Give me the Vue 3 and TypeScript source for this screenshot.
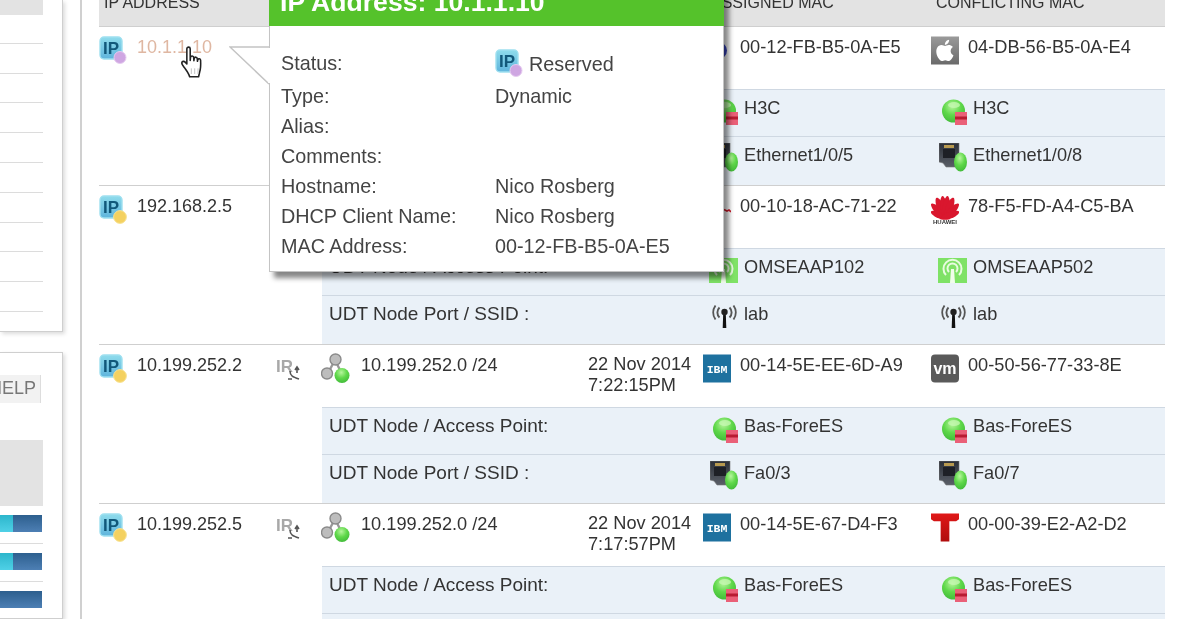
<script setup lang="ts">
interface Sub { label: string; icon: string; a: string; iconB: string; b: string }
interface Row { ip: string; badge: string; hover?: boolean; subnet: string; date: string[]; iconA: string; a: string; iconB: string; b: string; subs: Sub[] }

const node = 'UDT Node / Access Point:'
const port = 'UDT Node Port / SSID :'

const rows: Row[] = [
  { ip: '10.1.1.10', badge: 'ip-purple', hover: true, subnet: '10.1.1.0 /24', date: ['22 Nov 2014', '7:30:02PM'], iconA: 'logo-blue', a: '00-12-FB-B5-0A-E5', iconB: 'logo-apple', b: '04-DB-56-B5-0A-E4',
    subs: [
      { label: node, icon: 'globe', a: 'H3C', iconB: 'globe', b: 'H3C' },
      { label: port, icon: 'port', a: 'Ethernet1/0/5', iconB: 'port', b: 'Ethernet1/0/8' }
    ] },
  { ip: '192.168.2.5', badge: 'ip-yellow', subnet: '192.168.2.0 /24', date: ['22 Nov 2014', '7:28:40PM'], iconA: 'logo-mark', a: '00-10-18-AC-71-22', iconB: 'logo-huawei', b: '78-F5-FD-A4-C5-BA',
    subs: [
      { label: node, icon: 'ap', a: 'OMSEAAP102', iconB: 'ap', b: 'OMSEAAP502' },
      { label: port, icon: 'antenna', a: 'lab', iconB: 'antenna', b: 'lab' }
    ] },
  { ip: '10.199.252.2', badge: 'ip-yellow', subnet: '10.199.252.0 /24', date: ['22 Nov 2014', '7:22:15PM'], iconA: 'logo-ibm', a: '00-14-5E-EE-6D-A9', iconB: 'logo-vm', b: '00-50-56-77-33-8E',
    subs: [
      { label: node, icon: 'globe', a: 'Bas-ForeES', iconB: 'globe', b: 'Bas-ForeES' },
      { label: port, icon: 'port', a: 'Fa0/3', iconB: 'port', b: 'Fa0/7' }
    ] },
  { ip: '10.199.252.5', badge: 'ip-yellow', subnet: '10.199.252.0 /24', date: ['22 Nov 2014', '7:17:57PM'], iconA: 'logo-ibm', a: '00-14-5E-67-D4-F3', iconB: 'logo-t', b: '00-00-39-E2-A2-D2',
    subs: [
      { label: node, icon: 'globe', a: 'Bas-ForeES', iconB: 'globe', b: 'Bas-ForeES' },
      { label: port, icon: 'port', a: 'Fa0/5', iconB: 'port', b: 'Fa0/9' }
    ] }
]

const tipRows: [string, string][] = [
  ['Type:', 'Dynamic'],
  ['Alias:', ''],
  ['Comments:', ''],
  ['Hostname:', 'Nico Rosberg'],
  ['DHCP Client Name:', 'Nico Rosberg'],
  ['MAC Address:', '00-12-FB-B5-0A-E5']
]

const sideLines = Array.from({ length: 10 }, (_, i) => i)
const bars = [true, true, false]
const petals = [-70, -46, -24, -7, 7, 24, 46, 70]
</script>

<template>
  <div class="screen">
    <svg class="defs" width="0" height="0" aria-hidden="true">
      <defs>
        <linearGradient id="g-ip" x1="0" y1="0" x2="0" y2="1">
          <stop offset="0" stop-color="#8fdcec" /><stop offset="1" stop-color="#5fb4dc" />
        </linearGradient>
        <radialGradient id="g-green" cx=".45" cy=".3" r=".75">
          <stop offset="0" stop-color="#b6f59c" /><stop offset=".5" stop-color="#5fd84a" /><stop offset="1" stop-color="#3fb838" />
        </radialGradient>
        <linearGradient id="g-apple" x1="0" y1="0" x2="0" y2="1">
          <stop offset="0" stop-color="#9a9a9a" /><stop offset="1" stop-color="#6a6a6a" />
        </linearGradient>
        <linearGradient id="g-t" x1="0" y1="0" x2="0" y2="1">
          <stop offset="0" stop-color="#e01818" /><stop offset="1" stop-color="#b00c0c" />
        </linearGradient>
        <linearGradient id="g-port" x1="0" y1="0" x2="0" y2="1">
          <stop offset="0" stop-color="#2c3038" /><stop offset="1" stop-color="#5a5f68" />
        </linearGradient>

        <symbol id="ip-base" viewBox="0 0 28 29">
          <rect x="1" y="1" width="22" height="22" rx="4" fill="url(#g-ip)" stroke="#9fe0f0" stroke-width="1.4" />
          <text x="4" y="18" font-family="Liberation Sans, sans-serif" font-weight="700" font-size="17" fill="#11587a">IP</text>
        </symbol>
        <symbol id="ip-purple" viewBox="0 0 28 29">
          <use href="#ip-base" width="28" height="29" />
          <circle cx="21" cy="21.5" r="6" fill="#cfa6e2" stroke="#e6ccf0" />
        </symbol>
        <symbol id="ip-yellow" viewBox="0 0 28 29">
          <use href="#ip-base" width="28" height="29" />
          <circle cx="21" cy="22" r="6.4" fill="#f4d160" stroke="#f8e294" />
        </symbol>
        <symbol id="ir" viewBox="0 0 26 26">
          <text x="0" y="14" font-family="Liberation Sans, sans-serif" font-weight="700" font-size="17" fill="#a8a8a8">IR</text>
          <path d="M21 10v5M19 12l2-3 2 3" stroke="#555" stroke-width="1.6" fill="none" />
          <path d="M14 13c0 5 3 6 9 8M12 21h4" stroke="#555" stroke-width="1.6" fill="none" />
        </symbol>
        <symbol id="subnet" viewBox="0 0 30 32">
          <path d="M14 7L7 20M14 7l6 12" stroke="#999" stroke-width="2.4" />
          <circle cx="14.500" cy="6.500" r="5.500" fill="#bdbdbd" stroke="#8a8a8a" stroke-width="1.400" />
          <circle cx="6" cy="20.500" r="5.500" fill="#bdbdbd" stroke="#8a8a8a" stroke-width="1.400" />
          <circle cx="21" cy="22.500" r="7.500" fill="url(#g-green)" />
        </symbol>
        <symbol id="globe" viewBox="0 0 25 26">
          <circle cx="11.500" cy="12" r="11.500" fill="url(#g-green)" />
          <ellipse cx="12" cy="6" rx="6" ry="3" fill="#c4f7b0" opacity=".8" />
          <rect x="13" y="13" width="12" height="13" fill="#ea6078" />
          <rect x="13" y="17.500" width="12" height="3" fill="#b81c32" />
        </symbol>
        <symbol id="port" viewBox="0 0 28 29">
          <path d="M0 0h20v20l-3 4H7l-3-4-4-1z" fill="url(#g-port)" stroke="#777" stroke-width=".6" />
          <rect x="5" y="2" width="10" height="3" fill="#b89a50" />
          <rect x="4" y="6" width="12" height="9" fill="#1e2026" />
          <ellipse cx="21.500" cy="19" rx="6.500" ry="9.500" fill="url(#g-green)" />
        </symbol>
        <symbol id="ap" viewBox="0 0 29 25">
          <rect width="29" height="25" fill="#7fe266" />
          <path d="M8 17a9 9 0 1 1 13 0M11 14a5 5 0 1 1 7 0" fill="none" stroke="#e8fbe0" stroke-width="2" />
          <path d="M12 25l1-14h3l1 14z" fill="#f0fdea" />
        </symbol>
        <symbol id="antenna" viewBox="0 0 27 24">
          <path d="M12.300 7h2.400l.6 17h-3.600z" fill="#111" />
          <circle cx="13.500" cy="8" r="3.200" fill="#222" />
          <path d="M8.500 3.500a7 7 0 0 0 0 10M18.500 3.500a7 7 0 0 1 0 10M4.500 1.500a12 12 0 0 0 0 14M22.500 1.500a12 12 0 0 1 0 14" fill="none" stroke="#555" stroke-width="1.900" />
        </symbol>
        <symbol id="logo-apple" viewBox="0 0 28 28">
          <rect width="28" height="28" fill="url(#g-apple)" />
          <g transform="translate(1.200 1.200) scale(1.060)">
            <path fill="#fff" d="M18.710 19.500c-.83 1.240-1.710 2.450-3.050 2.470-1.340.03-1.770-.79-3.290-.79-1.530 0-2 .77-3.270.82-1.310.05-2.300-1.320-3.140-2.530C4.250 17 2.940 12.450 4.700 9.390c.87-1.520 2.430-2.480 4.120-2.510 1.280-.02 2.500.87 3.290.87.78 0 2.260-1.070 3.810-.91.65.03 2.470.26 3.640 1.980-.09.06-2.170 1.280-2.150 3.810.03 3.020 2.650 4.030 2.680 4.040-.03.07-.42 1.440-1.380 2.830M13 3.500c.73-.83 1.940-1.460 2.940-1.500.13 1.170-.34 2.350-1.040 3.190-.69.85-1.830 1.510-2.950 1.420-.15-1.150.41-2.350 1.050-3.110z" />
          </g>
        </symbol>
        <symbol id="logo-blue" viewBox="0 0 28 28">
          <circle cx="14" cy="14" r="13" fill="#fff" />
          <path d="M14 6a8 8 0 1 1 0 16 8 8 0 0 1 0-16z" fill="#2c35a8" />
          <circle cx="16" cy="14" r="8" fill="#3a46c4" />
        </symbol>
        <symbol id="logo-mark" viewBox="0 0 28 28">
          <path d="M21 14l3 1.500 2-1 2 2" stroke="#d01c2c" stroke-width="1.600" fill="none" />
        </symbol>
        <symbol id="logo-huawei" viewBox="0 0 28 29">
          <g fill="#d9172e">
            <path v-for="p in petals" :key="p" d="M14 22C8.800 14 10.400 5 13 1.500c.6-.8 1.400-.8 2 0 2.600 3.500 4.200 12.500-1 20.500z" :transform="`rotate(${p} 14 22) translate(0 ${Math.abs(p) > 60 ? 6 : Math.abs(p) > 40 ? 2 : 0})`" />
          </g>
          <text x="14" y="28.500" text-anchor="middle" font-family="Liberation Sans, sans-serif" font-weight="700" font-size="6" fill="#333">HUAWEI</text>
        </symbol>
        <symbol id="logo-ibm" viewBox="0 0 28 28">
          <rect width="28" height="28" fill="#1e719f" />
          <text x="14" y="18" text-anchor="middle" font-family="Liberation Mono, monospace" font-weight="700" font-size="11.500" fill="#fff">IBM</text>
        </symbol>
        <symbol id="logo-vm" viewBox="0 0 28 28">
          <rect width="28" height="28" rx="4" fill="#5a5a5a" />
          <text x="14" y="19" text-anchor="middle" font-family="Liberation Sans, sans-serif" font-weight="700" font-size="16" fill="#fff">vm</text>
        </symbol>
        <symbol id="logo-t" viewBox="0 0 29 29">
          <path d="M0 0h29v6l-3 2h-7v21h-9V8H3L0 6z" fill="url(#g-t)" />
        </symbol>
      </defs>
    </svg>

    <aside class="side">
      <section class="panel first">
        <div class="side-head"></div>
        <div v-for="n in sideLines" :key="n" class="side-line"></div>
      </section>
      <section class="panel second">
        <div class="help"><span>HELP</span></div>
        <div class="block"></div>
        <div v-for="(teal, i) in bars" :key="i" class="bar-row">
          <div class="bar"><span v-if="teal" class="teal"></span></div>
        </div>
      </section>
    </aside>

    <main class="main">
      <div class="table">
        <div class="head">
          <span class="h-ip">IP ADDRESS</span>
          <span class="h-a">ASSIGNED MAC</span>
          <span class="h-b">CONFLICTING MAC</span>
        </div>

        <div v-for="r in rows" :key="r.ip" class="row">
          <div class="cells">
            <svg class="i-ip"><use :href="`#${r.badge}`" /></svg>
            <span class="ip" :class="{ hover: r.hover }">{{ r.ip }}</span>
            <svg class="i-ir"><use href="#ir" /></svg>
            <svg class="i-sn"><use href="#subnet" /></svg>
            <span>{{ r.subnet }}</span>
            <span class="date"><span>{{ r.date[0] }}</span><span>{{ r.date[1] }}</span></span>
            <svg class="i-logo"><use :href="`#${r.iconA}`" /></svg>
            <span>{{ r.a }}</span>
            <svg class="i-logo"><use :href="`#${r.iconB}`" /></svg>
            <span>{{ r.b }}</span>
          </div>
          <div v-for="(s, i) in r.subs" :key="s.label" class="sub" :class="{ tall: i === 1 }">
            <span class="label">{{ s.label }}</span>
            <svg class="i-sub" :class="s.icon"><use :href="`#${s.icon}`" /></svg>
            <span>{{ s.a }}</span>
            <svg class="i-sub" :class="s.iconB"><use :href="`#${s.iconB}`" /></svg>
            <span>{{ s.b }}</span>
          </div>
        </div>
      </div>
    </main>

    <div class="tip">
      <div class="tip-head">IP Address: 10.1.1.10</div>
      <div class="tip-body">
        <div class="tip-row status">
          <span>Status:</span>
          <span class="tip-status"><svg class="i-ip"><use href="#ip-purple" /></svg><span class="tip-word">Reserved</span></span>
        </div>
        <div v-for="t in tipRows" :key="t[0]" class="tip-row">
          <span>{{ t[0] }}</span>
          <span>{{ t[1] }}</span>
        </div>
      </div>
    </div>

    <svg class="pointer" width="41" height="40" viewBox="0 0 41 40">
      <path d="M40 1H1l39 37" fill="#fff" stroke="#c4c4c4" stroke-width="1.500" />
      <rect x="39.200" y="2" width="2" height="35" fill="#fff" />
    </svg>

    <svg class="cursor" width="26" height="33" viewBox="0 0 23 29.500">
      <path d="M6 2.500c0-2 3-2 3 0V13l.3-3c.3-1.600 2.700-1.400 2.800.2l.2 3 .3-2.200c.3-1.500 2.500-1.300 2.700.2l.2 2.500.3-1.500c.4-1.300 2.500-1 2.500.5.200 4 .3 7-.8 10.300l-1 4.500H8.500c-.7-2.700-2-4.500-4-7.300-1.300-1.800-3.300-3.700-3-5.300.3-1.400 2-1.500 3-.5L6 16z" fill="#fff" stroke="#222" stroke-width="1.400" stroke-linejoin="round" />
      <path d="M10 20v5M13 20v5M16 20v5" stroke="#bbb" stroke-width=".8" />
    </svg>
  </div>
</template>

<style>
html, body { margin: 0; overflow: hidden; background: #fff; }
</style>

<style scoped>
.screen {
  position: relative;
  display: flex;
  width: 1180px;
  height: 619px;
  overflow: hidden;
  background: #fff;
  color: #333;
  font-family: "Liberation Sans", Arial, sans-serif;
  font-size: 18.2px;
  filter: blur(.35px);
}
.defs { position: absolute; }
svg { display: block; }

/* sidebar */
.side { display: flex; flex-direction: column; gap: 20px; width: 63px; flex: none; height: 619px; }
.panel {
  box-sizing: border-box;
  border: 1px solid #cfcfcf;
  border-left: 0;
  box-shadow: 2px 2px 4px rgba(0,0,0,.14);
  background: #fff;
  padding-right: 19px;
}
.first { flex: none; height: 332px; border-top: 0; }
.second { flex: 1; min-height: 0; overflow: hidden; padding-top: 22px; }
.side-head { height: 15px; background: #e3e3e3; margin-bottom: -1px; }
.side-line { height: 29.8px; box-sizing: border-box; border-bottom: 1px solid #dcdcdc; }
.help {
  box-sizing: border-box;
  display: flex;
  justify-content: flex-end;
  width: 41px;
  height: 28px;
  line-height: 26px;
  overflow: hidden;
  padding-right: 4px;
  background: #f2f2f2;
  border-right: 1px solid #ddd;
  color: #777;
  font-size: 18px;
}
.block { height: 66px; margin-top: 37px; background: #e3e3e3; }
.bar-row { height: 38px; box-sizing: border-box; padding-top: 9px; border-bottom: 1px solid #dcdcdc; }
.bar-row:last-child { border-bottom: 0; }
.bar { display: flex; height: 17px; width: 42px; background: linear-gradient(#2d5f8e, #4d7fb4); }
.teal { width: 13px; background: linear-gradient(#2cb6cc, #4fd0e6); }

/* main table */
.main {
  flex: none;
  margin-left: 17px;
  padding-left: 17px;
  border-left: 2px solid #d0d0d0;
  width: 1080px;
}
.table { width: 1066px; margin-top: -20px; }
.head {
  box-sizing: border-box;
  display: grid;
  grid-template-columns: 607px 225px 1fr;
  height: 47px;
  padding: 13px 0 0 5px;
  background: #e3e3e3;
  border-bottom: 1px solid #cfcfcf;
  font-size: 16px;
  line-height: 20px;
}
.row { box-sizing: border-box; height: 159px; border-bottom: 1.5px solid #cfcfcf; }
.cells {
  box-sizing: border-box;
  display: grid;
  grid-template-columns: 38px 139px 46px 39px 227px 115px 37px 191px 37px 1fr;
  height: 62px;
  padding-top: 9px;
  line-height: 22px;
  align-items: start;
}
.ip { font-size: 18px; }
.ip.hover { color: #dfb7a2; }
.date { display: flex; flex-direction: column; line-height: 20.5px; }
.i-ip { width: 28px; height: 29px; }
.i-ir { width: 26px; height: 26px; margin-top: 4px; }
.i-sn { width: 30px; height: 32px; margin-left: -1px; margin-top: -1px; }
.i-logo { width: 28px; height: 29px; }
.sub {
  box-sizing: border-box;
  display: grid;
  grid-template-columns: 381px 34px 195px 34px 1fr;
  align-items: start;
  margin-left: 223px;
  height: 47px;
  padding: 7px 0 0 7px;
  line-height: 22px;
  background: #eaf1f8;
  border-top: 1px solid #cfd8e2;
}
.sub.tall { height: 49px; }
.label { font-size: 19px; }
.i-sub { width: 28px; height: 29px; justify-self: end; margin-right: 6px; margin-top: -1px; }
.i-sub.globe { width: 25px; height: 26px; margin-top: 2px; }
.i-sub.ap { width: 29px; height: 25px; margin-top: 2px; }
.i-sub.antenna { width: 27px; height: 24px; margin-top: 1px; }

/* tooltip */
.tip {
  position: absolute;
  left: 269px;
  top: -22px;
  box-sizing: border-box;
  width: 455px;
  height: 294px;
  background: #fff;
  border: 1px solid #c4c4c4;
  border-top: 0;
  box-shadow: 5px 6px 5px rgba(0,0,0,.48);
  font-size: 19.8px;
  color: #444;
}
.tip-head {
  box-sizing: border-box;
  height: 48px;
  padding: 9px 0 0 11px;
  margin: 0 -1px 0 -1px;
  background: #55c22b;
  color: #fff;
  font-weight: 700;
  font-size: 26.6px;
  line-height: 30px;
}
.tip-body { padding: 19px 0 0 11px; }
.tip-row { display: grid; grid-template-columns: 214px 1fr; height: 30px; line-height: 30px; }
.tip-row.status { height: 36px; line-height: 36px; }
.tip-status { display: flex; align-items: center; gap: 6px; height: 36px; }
.tip-word { margin-top: 2px; }
.pointer { position: absolute; left: 229px; top: 46px; }
.cursor { position: absolute; left: 180px; top: 46px; }
</style>
